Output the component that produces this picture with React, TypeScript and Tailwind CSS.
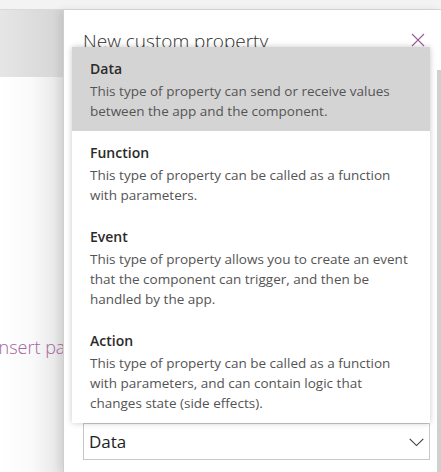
type PropertyType = { name: string; lines: string[] };

const types: PropertyType[] = [
  {
    name: "Data",
    lines: ["This type of property can send or receive values", "between the app and the component."],
  },
  {
    name: "Function",
    lines: ["This type of property can be called as a function", "with parameters."],
  },
  {
    name: "Event",
    lines: [
      "This type of property allows you to create an event",
      "that the component can trigger, and then be",
      "handled by the app.",
    ],
  },
  {
    name: "Action",
    lines: [
      "This type of property can be called as a function",
      "with parameters, and can contain logic that",
      "changes state (side effects).",
    ],
  },
];

const font = "font-['Segoe_UI','Open_Sans','Noto_Sans',sans-serif]";

export default function App() {
  const selected = "Data";

  return (
    <div className={`w-[441px] h-[472px] overflow-hidden flex flex-col bg-white ${font}`}>
      <div className="h-[10px] shrink-0 bg-[#f3f3f3] border-b border-[#d9d9d9]" />
      <div className="flex flex-1 min-h-0">
        {/* page behind the panel */}
        <div className="w-[63px] shrink-0 flex flex-col overflow-hidden">
          <div className="h-[67px] shrink-0 bg-gradient-to-r from-[#e6e6e6] to-[#d5d5d5]" />
          <div className="flex-1 bg-gradient-to-r from-white via-[#fafafa] to-[#e4e4e4] pt-[258px]">
            <div className="-ml-[6px] whitespace-nowrap text-[18px] font-light leading-6 text-[#a4649f]">
              Insert parameter
            </div>
          </div>
        </div>

        {/* side panel */}
        <div className="relative flex-1 flex bg-white border-l border-[#cfcfcf] shadow-[-4px_0_8px_rgba(0,0,0,0.08)]">
          <div className="flex-1 flex flex-col pl-[19px] pr-[7px]">
            <div className="flex items-start justify-between pt-[17px]">
              <h2 className="text-[19px] font-light leading-7 text-[#323130]">New custom property</h2>
              <svg width="14" height="14" viewBox="0 0 14 14" className="mt-[6px] mr-[5px]">
                <path d="M1 1L13 13M13 1L1 13" stroke="#9b5d99" strokeWidth="1.1" fill="none" />
              </svg>
            </div>

            <div className="mt-auto mb-[12px] h-[37px] flex items-center justify-between border border-[#c8c8c8] pl-[5px] pr-[5px]">
              <span className="text-[17px] leading-6 text-[#201f1e]">{selected}</span>
              <svg width="15" height="9" viewBox="0 0 15 9" className="mt-[2px]">
                <path d="M0.7 0.9L7.5 7.6L14.3 0.9" stroke="#3a3a3a" strokeWidth="1.1" fill="none" />
              </svg>
            </div>
          </div>
          <div className="w-[4px] mt-[60px] bg-[#d0d0d0]" />

          {/* dropdown menu */}
          <div className="absolute left-[8px] top-[37px] w-[358px] bg-white shadow-[0_0_6px_rgba(0,0,0,0.22)]">
            {types.map((t) => (
              <div
                key={t.name}
                className={`px-[18px] py-[10px] ${t.name === selected ? "bg-[#d4d4d4]" : "bg-white"}`}
              >
                <div className="text-[14px] font-semibold leading-6 text-[#2b2a29]">{t.name}</div>
                {t.lines.map((l) => (
                  <div key={l} className="text-[13.5px] leading-5 whitespace-nowrap text-[#545454]">
                    {l}
                  </div>
                ))}
              </div>
            ))}
          </div>
        </div>
      </div>
    </div>
  );
}
